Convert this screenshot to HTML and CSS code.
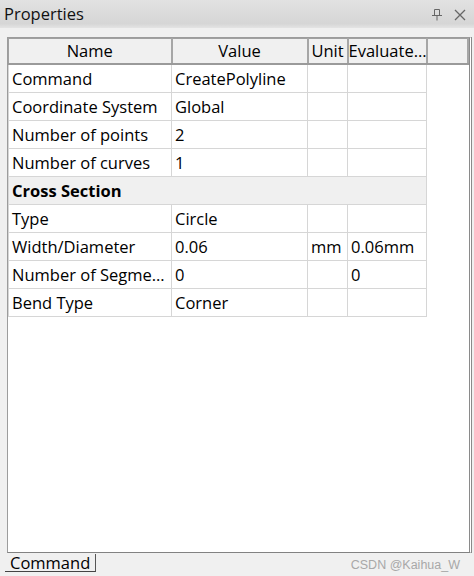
FILE: index.html
```html
<!DOCTYPE html>
<html>
<head>
<meta charset="utf-8">
<link rel="stylesheet" href="styles.css">
</head>
<body>
<div class="panel">
  <div class="titlebar">
    <span class="title">Properties</span>
    <div class="tools">
      <svg class="pin" width="12" height="14" viewBox="0 0 12 14">
        <path d="M3.5 1.5h5v6h-5z M1 7.5h10 M6 7.5v5" fill="none" stroke="#666" stroke-width="1"/>
      </svg>
      <svg class="close" width="12" height="12" viewBox="0 0 12 12">
        <path d="M1 1L11 11M11 1L1 11" stroke="#666" stroke-width="1.3"/>
      </svg>
    </div>
  </div>
  <div class="content">
    <div class="frame">
      <table class="grid">
        <colgroup>
          <col class="c-name"><col class="c-value"><col class="c-unit"><col class="c-eval"><col class="c-fill">
        </colgroup>
        <thead>
          <tr><th>Name</th><th>Value</th><th>Unit</th><th>Evaluate…</th><th class="fill"></th></tr>
        </thead>
        <tbody>
          <tr><td>Command</td><td>CreatePolyline</td><td></td><td></td><td class="fill"></td></tr>
          <tr><td>Coordinate System</td><td>Global</td><td></td><td></td><td class="fill"></td></tr>
          <tr><td>Number of points</td><td>2</td><td></td><td></td><td class="fill"></td></tr>
          <tr><td>Number of curves</td><td>1</td><td></td><td></td><td class="fill"></td></tr>
          <tr class="section"><td colspan="4">Cross Section</td><td class="fill"></td></tr>
          <tr><td>Type</td><td>Circle</td><td></td><td></td><td class="fill"></td></tr>
          <tr><td>Width/Diameter</td><td>0.06</td><td>mm</td><td>0.06mm</td><td class="fill"></td></tr>
          <tr><td>Number of Segme…</td><td>0</td><td></td><td>0</td><td class="fill"></td></tr>
          <tr><td>Bend Type</td><td>Corner</td><td></td><td></td><td class="fill"></td></tr>
        </tbody>
      </table>
    </div>
  </div>
  <div class="tabstrip">
    <div class="tab">Command</div>
    <div class="tabline"></div>
    <span class="watermark">CSDN @Kaihua_W</span>
  </div>
</div>
</body>
</html>
```
FILE: styles.css
```css
html, body {
  margin: 0;
  padding: 0;
}
body {
  width: 474px;
  height: 576px;
  overflow: hidden;
  background: #f0f0f0;
  font-family: "Open Sans", "Noto Sans", sans-serif;
  color: #000;
}
.panel {
  width: 474px;
  height: 576px;
  display: flex;
  flex-direction: column;
}
.titlebar {
  height: 28px;
  flex: none;
  background: linear-gradient(#e2e2e2, #d6d6d6 85%, #e4e4e4);
  display: flex;
  align-items: center;
  justify-content: space-between;
  padding: 0 8px 0 4px;
  box-sizing: border-box;
}
.title {
  font-size: 16.5px;
  line-height: 28px;
  color: #111;
}
.tools {
  display: flex;
  align-items: center;
  gap: 11px;
  padding-top: 2px;
}
.content {
  flex: 1;
  padding: 9px 4px 0 7px;
  display: flex;
}
.frame {
  flex: 1;
  background: #fff;
  border: 1px solid #9c9c9c;
  border-right: 3px double #8a8a8a;
  border-bottom: 1px solid #828282;
}
.grid {
  border-collapse: collapse;
  table-layout: fixed;
  width: 459px;
  font-size: 16.5px;
}
.c-name { width: 163px; }
.c-value { width: 136px; }
.c-unit { width: 40px; }
.c-eval { width: 79px; }
.c-fill { width: 41px; }
th {
  height: 24px;
  background: #f0f0f0;
  font-weight: normal;
  border: 1px solid #a0a0a0;
  border-right: 2px solid #a6a6a6;
  border-bottom: 2px solid #9a9a9a;
  padding: 0;
  text-align: center;
  line-height: 24px;
  white-space: nowrap;
  overflow: hidden;
}
td {
  height: 27px;
  border: 1px solid #d6d6d6;
  padding: 0 0 0 3px;
  line-height: 26px;
  white-space: nowrap;
  overflow: hidden;
}
td.fill {
  border: none;
  border-left: 1px solid #d6d6d6;
}
tr:first-child td {
  border-top: none;
}
.section td:first-child {
  background: #f0f0f0;
  font-weight: bold;
}
.tabstrip {
  height: 23px;
  flex: none;
  display: flex;
  align-items: flex-start;
  position: relative;
  padding-left: 5px;
}
.tab {
  font-size: 16.5px;
  line-height: 18px;
  padding: 0 5px 0 5px;
  border-bottom: 1px solid #444;
  border-right: 1px solid #555;
  height: 17px;
  margin-top: 1px;
}
.tabline {
  flex: 1;
}
.watermark {
  position: absolute;
  right: 14px;
  top: 5px;
  font-family: "Liberation Sans", Arial, sans-serif;
  font-size: 12.5px;
  color: #a8a8a8;
}
```
